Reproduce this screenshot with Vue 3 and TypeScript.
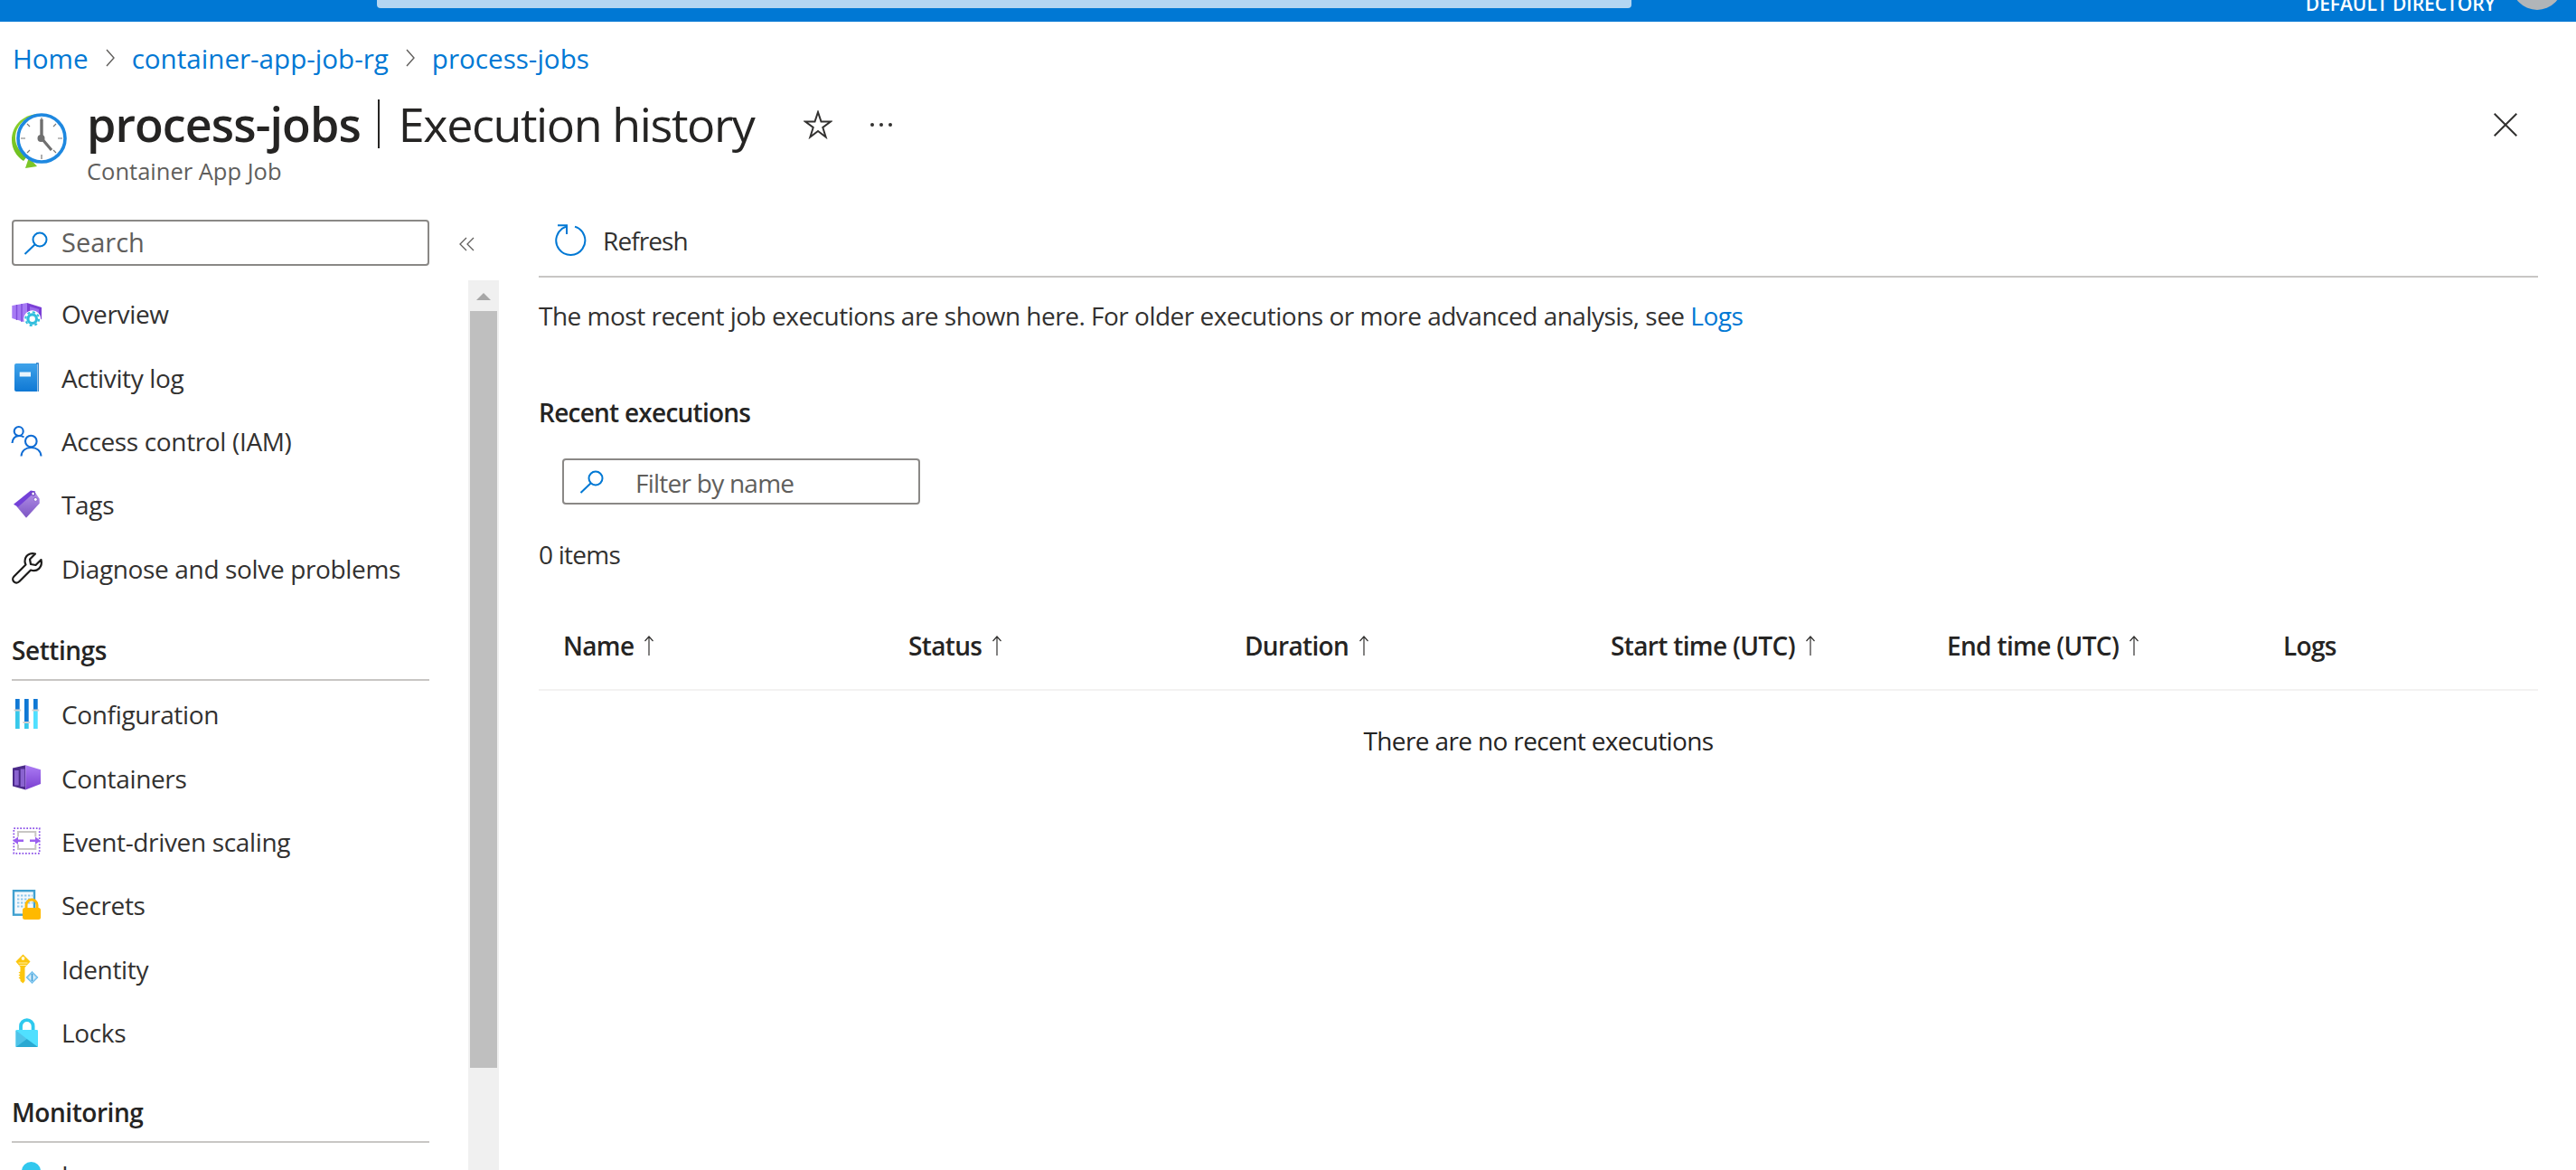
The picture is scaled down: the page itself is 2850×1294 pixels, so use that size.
<script setup lang="ts">
interface NavItem { label: string; icon: string }
const general: NavItem[] = [
  { label: 'Overview', icon: 'overview' },
  { label: 'Activity log', icon: 'activity' },
  { label: 'Access control (IAM)', icon: 'access' },
  { label: 'Tags', icon: 'tags' },
  { label: 'Diagnose and solve problems', icon: 'diagnose' },
]
const settings: NavItem[] = [
  { label: 'Configuration', icon: 'config' },
  { label: 'Containers', icon: 'containers' },
  { label: 'Event-driven scaling', icon: 'scaling' },
  { label: 'Secrets', icon: 'secrets' },
  { label: 'Identity', icon: 'identity' },
  { label: 'Locks', icon: 'locks' },
]
const monitoring: NavItem[] = [{ label: 'Logs', icon: 'logs' }]
const groups = [
  { title: '', items: general },
  { title: 'Settings', items: settings },
  { title: 'Monitoring', items: monitoring },
]
const columns = [
  { label: 'Name', sort: true },
  { label: 'Status', sort: true },
  { label: 'Duration', sort: true },
  { label: 'Start time (UTC)', sort: true },
  { label: 'End time (UTC)', sort: true },
  { label: 'Logs', sort: false },
]
</script>

<template>
  <div class="page">
    <header class="topbar">
      <div class="top-search"></div>
      <div class="top-right">
        <span class="directory">DEFAULT DIRECTORY</span>
        <span class="avatar"></span>
      </div>
    </header>

    <nav class="crumbs">
      <a>Home</a>
      <svg class="chev" viewBox="0 0 12 22"><path d="M2 2l8 9-8 9" /></svg>
      <a>container-app-job-rg</a>
      <svg class="chev" viewBox="0 0 12 22"><path d="M2 2l8 9-8 9" /></svg>
      <a>process-jobs</a>
    </nav>

    <section class="head">
      <svg class="clock" viewBox="0 0 64 64">
        <defs>
          <linearGradient id="gr" x1="0" y1="0" x2="0" y2="1"><stop offset="0" stop-color="#8fd12e" /><stop offset="1" stop-color="#6cbf1f" /></linearGradient>
        </defs>
        <path d="M30 2C12 3 1 16 1 31c0 9 5 18 13 23l4-5C10 44 5 37 5 29 5 15 16 5 30 2z" fill="url(#gr)" />
        <path d="M16 62l13-2-9-10z" fill="#7cc627" />
        <circle cx="34" cy="29" r="26" fill="#fff" stroke="#1e88e0" stroke-width="3.6" />
        <g stroke="#7a7a7a" stroke-width="1.2">
          <path d="M34 6v5M34 47v5M11 29h5M52 29h5M18 13l3 3M50 13l-3 3M18 45l3-3M50 45l-3-3" />
        </g>
        <path d="M34 29V8" stroke="#6f6f6f" stroke-width="3.4" />
        <path d="M34 29l11 13" stroke="#6f6f6f" stroke-width="3.2" />
        <circle cx="33.5" cy="29" r="4" fill="#6f6f6f" />
      </svg>
      <div class="head-text">
        <h1><b>process-jobs</b><span class="bar"></span><span class="blade">Execution history</span></h1>
        <div class="kind">Container App Job</div>
      </div>
      <svg class="star" viewBox="0 0 32 32"><path d="M16 2l3.500 10.500H30l-8.700 6.500 3.300 10.500L16 23l-8.600 6.500L10.700 19 2 12.500h10.500z" /></svg>
      <span class="dots"><i></i><i></i><i></i></span>
      <svg class="close" viewBox="0 0 26 26"><path d="M0.7 0.7l24.6 24.6M25.3 0.7L0.7 25.3" /></svg>
    </section>

    <div class="body">
      <aside class="side">
        <div class="side-col">
          <label class="searchbox">
            <svg class="mag" viewBox="0 0 28 26"><circle cx="18" cy="9" r="7.5" /><path d="M12.5 14.5L1.5 25" /></svg>
            <span>Search</span>
          </label>
          <div class="nav">
            <div v-for="g in groups" :key="g.title" class="group">
              <div v-if="g.title" class="group-title">{{ g.title }}</div>
              <div v-for="it in g.items" :key="it.label" class="row">
                <svg class="ico" viewBox="0 0 34 34">
                  <template v-if="it.icon === 'overview'">
                    <path d="M0.300 8L17 5v22L0.300 22z" fill="#a67af4" />
                    <path d="M5.500 7v17M11 6v20" stroke="#7f4bdc" stroke-width="1.400" />
                    <path d="M17 5l16 5v13l-16 4z" fill="#7b3fd6" />
                    <path d="M20 9l10 3v4l-10 4z" fill="#9b6cec" />
                    <circle cx="22.700" cy="22.700" r="9.500" fill="#fff" />
                    <circle cx="22.700" cy="22.700" r="4.800" fill="#fff" stroke="#32bedd" stroke-width="3.200" />
                    <circle cx="22.700" cy="22.700" r="7.400" fill="none" stroke="#32bedd" stroke-width="2" stroke-dasharray="3 2.800" />
                  </template>
                  <template v-else-if="it.icon === 'activity'">
                    <defs><linearGradient id="bookG" x1="0" y1="0" x2="0" y2="1"><stop offset="0" stop-color="#3fa3ea" /><stop offset="1" stop-color="#0f78d4" /></linearGradient></defs>
                    <path d="M5 1h23v31H5a2 2 0 0 1-2-2V3a2 2 0 0 1 2-2z" fill="url(#bookG)" />
                    <path d="M27 0.800h2.200v31.200" fill="none" stroke="#0f6cbd" stroke-width="1.200" />
                    <rect x="8.700" y="10.500" width="12.300" height="5" fill="#eaf4fc" />
                  </template>
                  <template v-else-if="it.icon === 'access'">
                    <g fill="none" stroke="#0f6cd4" stroke-width="2.100">
                      <circle cx="7.700" cy="6" r="5" />
                      <path d="M0.500 19c.5-5 3.500-8 8-8 2 0 3.500 .5 5 1.500" />
                      <circle cx="21.300" cy="17" r="6.300" />
                      <path d="M10.500 33.500c.5-6 5-9.500 11-9.500s10.500 3.500 11 9.500" />
                    </g>
                  </template>
                  <template v-else-if="it.icon === 'tags'">
                    <defs><linearGradient id="tagG" x1="0" y1="0" x2="0" y2="1"><stop offset="0" stop-color="#b392e8" /><stop offset="1" stop-color="#7d55c4" /></linearGradient></defs>
                    <path d="M5.300 19L25.300 2.400l5.400 8.300v5L16 31.700z" fill="url(#tagG)" />
                    <path d="M2 16.700L21 1.400l5.300 1L7 19.700z" fill="#7441d8" />
                    <circle cx="23.700" cy="5" r="2" fill="#fff" stroke="#5c2fb8" stroke-width="1" />
                    <circle cx="26.300" cy="11.400" r="2" fill="#fff" stroke="#8a63cc" stroke-width="1" />
                  </template>
                  <template v-else-if="it.icon === 'diagnose'">
                    <path d="M32.500 7l-6 6-5.500-1-1-5.500 6-6C20 -1 14.500 2 14.500 9c0 1.500.5 2.500 1 3.500L2.500 25.500c-2 2-1.500 4.500 0 6s4 1.500 6-.5L21 18.500c7 2.500 13.500-3 11.500-11.500z" fill="none" stroke="#1b1a19" stroke-width="2.200" stroke-linejoin="round" />
                  </template>
                  <template v-else-if="it.icon === 'config'">
                    <rect x="4" y="0" width="4.700" height="12" fill="#0f78d4" />
                    <rect x="4" y="12" width="4.700" height="21" fill="#37c8ea" />
                    <rect x="2.500" y="11.500" width="7.700" height="2" fill="#d2d0ce" />
                    <rect x="14" y="0" width="4.700" height="26" fill="#0f78d4" />
                    <rect x="14" y="26" width="4.700" height="7" fill="#37c8ea" />
                    <rect x="12.500" y="25" width="7.700" height="2" fill="#d2d0ce" />
                    <rect x="24" y="0" width="4.700" height="12" fill="#0f78d4" />
                    <rect x="24" y="12" width="4.700" height="21" fill="#50e0ff" />
                    <rect x="22.500" y="11.500" width="7.700" height="2" fill="#d2d0ce" />
                  </template>
                  <template v-else-if="it.icon === 'containers'">
                    <defs><linearGradient id="cubeG" x1="0" y1="0" x2="0" y2="1"><stop offset="0" stop-color="#ac7cf4" /><stop offset="1" stop-color="#7a3fd0" /></linearGradient></defs>
                    <path d="M1 5.500L15.300 2.200v27.300L1 25.500z" fill="#4b2a8a" />
                    <path d="M15.300 2.200L32 7.200v15.700L15.300 29.500z" fill="url(#cubeG)" />
                    <rect x="3" y="8" width="4.700" height="16.500" fill="#8a63d0" />
                    <rect x="9.700" y="6.500" width="4.600" height="19.500" fill="#8a63d0" />
                  </template>
                  <template v-else-if="it.icon === 'scaling'">
                    <rect x="2.300" y="2.200" width="28.400" height="27.600" fill="none" stroke="#8a4fe8" stroke-width="1.700" stroke-dasharray="1.700 1.800" />
                    <path d="M7 11.500V6h19.300v5.500M7 20v5h19.300v-5" fill="none" stroke="#c8c6c4" stroke-width="2" />
                    <path d="M6 15.800h7M20 15.800h7" stroke="#9b5ff0" stroke-width="2.600" />
                    <path d="M7 11.500L1.300 15.800 7 20zM26 11.500l5.700 4.300L26 20z" fill="#9b5ff0" />
                  </template>
                  <template v-else-if="it.icon === 'secrets'">
                    <rect x="2" y="1.200" width="23" height="26.500" fill="#f4f9fd" stroke="#3fa0d0" stroke-width="2.400" />
                    <path d="M6 6.500h17M6 10.500h17M6 14.500h17M6 18.500h8" stroke="#8ec8ec" stroke-width="2" stroke-dasharray="2.400 1.600" />
                    <path d="M16 21v-4a6 6 0 0 1 12 0v4" fill="none" stroke="#ffb900" stroke-width="3" />
                    <rect x="12" y="20" width="20" height="13" rx="2.500" fill="#ffb900" />
                  </template>
                  <template v-else-if="it.icon === 'identity'">
                    <path d="M12.500 0.500l8 8-6 6.500v1l0 14-2 2.500-3-2.500v-2l-2-1.500 2-1.500-2-1.500 2-1.500-2-1.500 2-1v-5L4.500 8.500z" fill="#fcc60e" />
                    <path d="M7.500 10h10M8.500 12.500h8" stroke="#fff0a8" stroke-width="1.200" />
                    <circle cx="12.500" cy="5" r="1.900" fill="#fff8d8" />
                    <path d="M22.500 18.500l7.500 7.500-7.500 7.500-7.500-7.500z" fill="#7fc5ee" stroke="#fff" stroke-width="0.800" />
                    <path d="M22.500 21.500l4.500 4.500-4.500 4.500-4.500-4.500z" fill="#d5ecfa" />
                    <path d="M22.500 22v8" stroke="#3f9fd8" stroke-width="1.600" />
                  </template>
                  <template v-else-if="it.icon === 'locks'">
                    <path d="M10 15V10a6.800 6.800 0 0 1 13.600 0v5" fill="none" stroke="#2ec9ee" stroke-width="3.800" />
                    <rect x="4.500" y="14" width="24.500" height="19" rx="1.200" fill="#50e0ff" />
                    <path d="M4.500 14.500L16.700 24 4.500 33z" fill="#4fc3e8" />
                    <path d="M4.500 33L16.700 24 29 33z" fill="#2aa9d2" />
                  </template>
                  <template v-else>
                    <circle cx="21.500" cy="13.500" r="10.500" fill="#32c8ee" />
                  </template>
                </svg>
                <span>{{ it.label }}</span>
              </div>
            </div>
          </div>
        </div>
        <svg class="collapse" viewBox="0 0 20 16"><path d="M9 1L2 8l7 7M17 1l-7 7 7 7" /></svg>
        <div class="scroll">
          <div class="scroll-up"></div>
          <div class="scroll-thumb"></div>
        </div>
      </aside>

      <main class="main">
        <div class="toolbar">
          <svg class="refresh" viewBox="0 0 36 36"><path d="M23 2.600A16 16 0 1 1 13 2.800" /><path d="M4 1.200h10V11" /></svg>
          <span>Refresh</span>
        </div>
        <p class="intro">The most recent job executions are shown here. For older executions or more advanced analysis, see <a>Logs</a></p>
        <h2>Recent executions</h2>
        <label class="filter">
          <svg class="mag" viewBox="0 0 28 26"><circle cx="18" cy="9" r="7.500" /><path d="M12.500 14.500L1.500 25" /></svg>
          <span>Filter by name</span>
        </label>
        <div class="count">0 items</div>
        <div class="thead">
          <div v-for="c in columns" :key="c.label" class="th">
            {{ c.label }}<svg v-if="c.sort" class="arrow" viewBox="0 0 12 24"><path d="M6 23V2M1.500 7L6 2l4.500 5" /></svg>
          </div>
        </div>
        <div class="empty">There are no recent executions</div>
      </main>
    </div>
  </div>
</template>

<style>
html, body { margin: 0; overflow: hidden; background: #fff; }
</style>

<style scoped>
.page {
  width: 2850px; height: 1294px; overflow: hidden; background: #fff; color: #323130;
  font-family: "Open Sans", "Noto Sans", sans-serif; font-size: 28px; letter-spacing: -0.75px;
  display: flex; flex-direction: column;
}
.topbar { height: 24px; flex: none; background: #0078d4; display: flex; align-items: flex-start; overflow: hidden; }
.top-search { margin-left: 417px; width: 1388px; height: 9px; background: #b3d6f2; border-radius: 0 0 4px 4px; }
.top-right { margin-left: auto; display: flex; align-items: flex-start; padding-right: 15px; }
.directory { color: #fff; font-size: 21px; font-weight: 600; letter-spacing: -0.05px; line-height: 24px; margin-top: -8px; margin-right: 18px; }
.avatar { width: 56px; height: 56px; border-radius: 50%; background: #b1b5b8; margin-top: -45px; }

.crumbs { height: 80px; flex: none; display: flex; align-items: center; padding-left: 14px; color: #0078d4; box-sizing: border-box; font-size: 29.6px; letter-spacing: 0; }
.chev { width: 12px; height: 22px; margin: 0 18px; fill: none; stroke: #605e5c; stroke-width: 1.4; }

.head { height: 132px; flex: none; position: relative; display: flex; align-items: flex-start; padding-left: 12px; }
.clock { width: 64px; height: 64px; margin-top: 20px; flex: none; }
.head-text { margin-left: 20px; }
h1 { margin: 0; font-size: 52px; font-weight: 400; line-height: 66px; display: flex; align-items: center; letter-spacing: -1.4px; color: #252423; }
h1 b { font-weight: 600; letter-spacing: -0.9px; }
.bar { width: 2px; height: 54px; background: #252423; margin: 0 21px 0 19px; }
.kind { font-size: 25.5px; color: #605e5c; line-height: 34px; margin-top: 2px; letter-spacing: 0; }
.star { width: 32px; height: 32px; margin: 18px 0 0 55px; fill: none; stroke: #323130; stroke-width: 2; flex: none; }
.dots { display: flex; gap: 6px; margin: 32px 0 0 42px; }
.dots i { width: 4px; height: 4px; border-radius: 50%; background: #323130; }
.close { position: absolute; right: 65px; top: 21px; width: 26px; height: 26px; fill: none; stroke: #323130; stroke-width: 2; }

.body { flex: 1; display: flex; min-height: 0; }
.side { width: 596px; flex: none; display: flex; align-items: flex-start; padding-left: 13px; box-sizing: border-box; }
.side-col { width: 462px; flex: none; padding-top: 7px; }
.searchbox { height: 51px; box-sizing: border-box; border: 2px solid #8a8886; border-radius: 4px; display: flex; align-items: center; padding-left: 11px; color: #605e5c; font-size: 29px; letter-spacing: 0; }
.mag { width: 28px; height: 26px; fill: none; stroke: #0078d4; stroke-width: 2; flex: none; }
.searchbox span { margin-left: 14px; margin-top: -2px; }
.nav { margin-top: 18px; letter-spacing: -0.35px; }
.row { height: 70.4px; display: flex; align-items: center; }
.ico { width: 34px; height: 34px; flex: none; margin-right: 21px; overflow: visible; }
.group-title { height: 89px; box-sizing: border-box; padding-top: 38px; line-height: 35px; font-weight: 600; letter-spacing: -0.45px; border-bottom: 2px solid #c8c6c4; margin-bottom: 2px; color: #252423; }
.group:last-child .group-title { height: 87px; padding-top: 36px; margin-bottom: 0; }
.collapse { width: 20px; height: 16px; margin: 26px 0 0 32px; fill: none; stroke: #605e5c; stroke-width: 1.3; flex: none; }
.scroll { width: 34px; height: 984px; margin: 74px 0 0 -9px; background: #f0f0f0; display: flex; flex-direction: column; align-items: center; flex: none; }
.scroll-up { width: 0; height: 0; margin-top: 14px; border: 8px solid transparent; border-top: 0; border-bottom-color: #a6a6a6; }
.scroll-thumb { width: 30px; height: 837px; background: #bfbfbf; margin-top: 12px; }

.main { flex: 1; min-width: 0; margin-right: 42px; }
.toolbar { height: 71px; box-sizing: border-box; border-bottom: 2px solid #c8c6c4; display: flex; align-items: center; padding: 0 0 9px 17px; letter-spacing: -0.9px; }
.refresh { width: 36px; height: 36px; fill: none; stroke: #0078d4; stroke-width: 2; margin-right: 18px; flex: none; overflow: visible; }
.intro { margin: 24px 0 0; line-height: 36px; letter-spacing: -0.5px; }
a { color: #0078d4; }
h2 { margin: 71px 0 0; font-size: 28px; font-weight: 600; line-height: 36px; letter-spacing: -0.75px; color: #252423; }
.filter { margin: 33px 0 0 26px; width: 396px; height: 51px; box-sizing: border-box; border: 2px solid #8a8886; border-radius: 4px; display: flex; align-items: center; padding-left: 17px; color: #605e5c; }
.filter span { margin-left: 34px; margin-top: 2px; }
.count { margin-top: 37px; line-height: 36px; }
.thead { display: grid; grid-template-columns: 382px 372px 405px 372px 372px 1fr; padding-left: 27px; height: 133px; box-sizing: border-box; padding-top: 65px; line-height: 36px; border-bottom: 2px solid #f3f2f1; font-weight: 600; color: #252423; letter-spacing: -0.65px; }
.th { display: flex; align-items: center; gap: 11px; height: 36px; }
.arrow { width: 12px; height: 24px; fill: none; stroke: #323130; stroke-width: 1.2; }
.empty { text-align: center; margin-top: 37px; line-height: 36px; color: #252423; letter-spacing: -0.63px; }
</style>
